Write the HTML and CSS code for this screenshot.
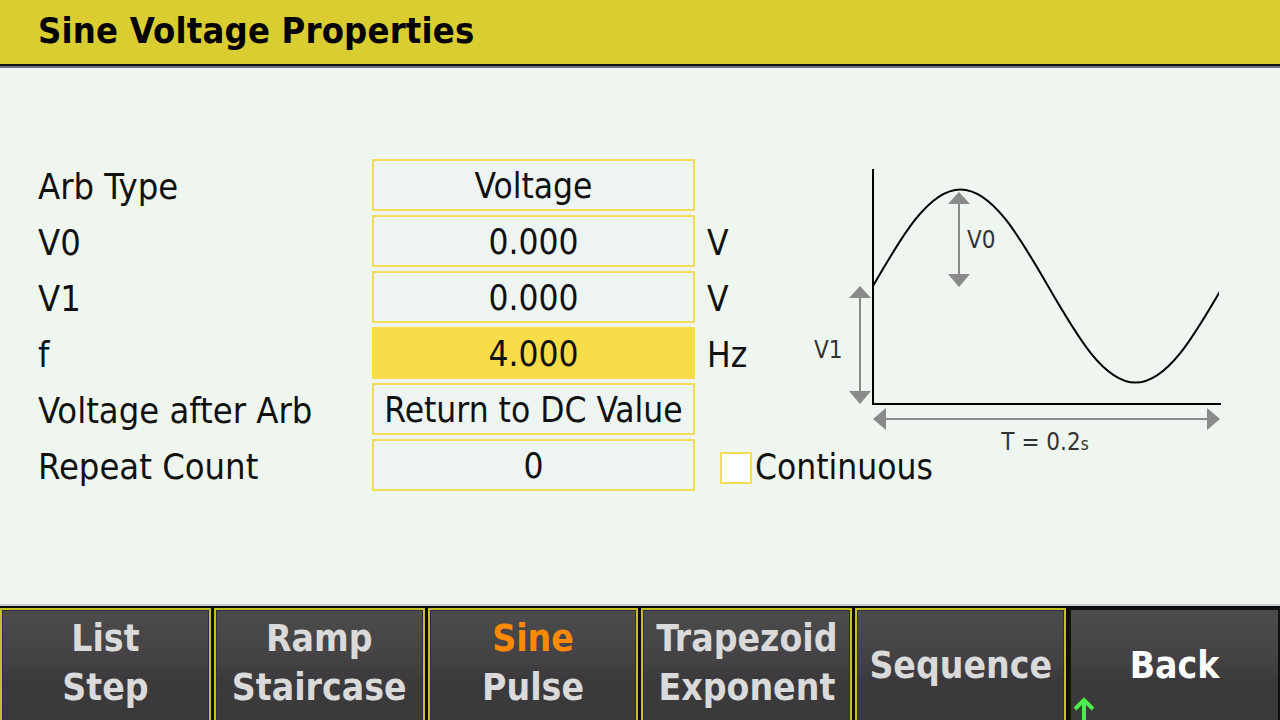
FILE: index.html
```html
<!DOCTYPE html>
<html>
<head>
<meta charset="utf-8">
<link rel="stylesheet" href="styles.css">
</head>
<body>
<div class="screen">
  <header class="titlebar">
    <h1 class="title">Sine Voltage Properties</h1>
  </header>
  <main class="content">
    <div class="form">
      <div class="label">Arb Type</div>
      <div class="field">Voltage</div>
      <div class="unit"></div>

      <div class="label">V0</div>
      <div class="field">0.000</div>
      <div class="unit">V</div>

      <div class="label">V1</div>
      <div class="field">0.000</div>
      <div class="unit">V</div>

      <div class="label">f</div>
      <div class="field selected">4.000</div>
      <div class="unit">Hz</div>

      <div class="label">Voltage after Arb</div>
      <div class="field">Return to DC Value</div>
      <div class="unit"></div>

      <div class="label">Repeat Count</div>
      <div class="field">0</div>
      <div class="unit"><span class="checkbox"></span><span class="check-label">Continuous</span></div>
    </div>
    <svg class="graph" width="430" height="300" viewBox="0 0 430 300">
      <defs>
        <clipPath id="plot"><rect x="0" y="0" width="419" height="300"/></clipPath>
      </defs>
      <line x1="73" y1="10" x2="73" y2="246" stroke="#000" stroke-width="2"/>
      <line x1="72" y1="245" x2="421" y2="245" stroke="#000" stroke-width="2"/>
      <path clip-path="url(#plot)" d="M73 127 C101.5 77.6 128.8 30.5 160.5 30.5 S219.5 77.6 248 127 S303.8 223.5 335.5 223.5 S394.5 176.4 423 127" fill="none" stroke="#000" stroke-width="2"/>
      <line x1="159" y1="40" x2="159" y2="118" stroke="#8a8a8a" stroke-width="2"/>
      <polygon points="148,45 170,45 159,33" fill="#8a8a8a"/>
      <polygon points="148,115 170,115 159,128" fill="#8a8a8a"/>
      <line x1="60" y1="134" x2="60" y2="236" stroke="#8a8a8a" stroke-width="2"/>
      <polygon points="49,139 71,139 60,127" fill="#8a8a8a"/>
      <polygon points="49,232 71,232 60,245" fill="#8a8a8a"/>
      <line x1="80" y1="260" x2="413" y2="260" stroke="#8a8a8a" stroke-width="2"/>
      <polygon points="86,249 86,271 73,260" fill="#8a8a8a"/>
      <polygon points="407,249 407,271 420,260" fill="#8a8a8a"/>
      <text x="167" y="89" class="glabel">V0</text>
      <text x="14" y="199" class="glabel">V1</text>
      <text x="245" y="291" class="glabel" text-anchor="middle">T = 0.2<tspan class="small">s</tspan></text>
    </svg>
  </main>
  <nav class="softkeys">
    <div class="key"><span>List</span><span>Step</span></div>
    <div class="key"><span>Ramp</span><span>Staircase</span></div>
    <div class="key"><span class="active">Sine</span><span>Pulse</span></div>
    <div class="key"><span>Trapezoid</span><span>Exponent</span></div>
    <div class="key"><span class="single">Sequence</span></div>
    <div class="key back"><span class="single">Back</span>
      <svg class="uparrow" width="26" height="26" viewBox="0 0 26 26">
        <path d="M13 4 V26 M4 13 L13 4 L22 13" fill="none" stroke="#4cf04c" stroke-width="4"/>
      </svg>
    </div>
  </nav>
</div>
</body>
</html>
```

FILE: styles.css
```css
* { box-sizing: border-box; }
html, body {
  margin: 0;
  padding: 0;
  width: 1280px;
  height: 720px;
  overflow: hidden;
  background: #eff6ef;
  font-family: "DejaVu Sans Condensed", "DejaVu Sans", sans-serif;
}
.screen {
  width: 1280px;
  height: 720px;
  display: flex;
  flex-direction: column;
  overflow: hidden;
}
.titlebar {
  height: 66px;
  flex: none;
  background: #d9cd32;
  border-bottom: 2px solid #111;
  box-shadow: 0 2px 0 #6d7282;
  display: flex;
  align-items: center;
  padding-left: 38px;
  padding-bottom: 4px;
}
.title {
  margin: 0;
  font-size: 36px;
  font-weight: bold;
  color: #000;
  letter-spacing: 0.2px;
}
.content {
  flex: 1;
  display: flex;
  align-items: flex-start;
  padding: 93px 0 0 38px;
}
.form {
  display: grid;
  grid-template-columns: 334px 323px 105px;
  grid-auto-rows: 52px;
  row-gap: 4px;
  width: 762px;
}
.label {
  font-size: 36px;
  color: #111;
  display: flex;
  align-items: center;
  padding-top: 2px;
  white-space: nowrap;
}
.field {
  border: 2px solid #f3dc57;
  background: #eef4f2;
  font-size: 35px;
  color: #111;
  display: flex;
  align-items: center;
  justify-content: center;
  padding-top: 2px;
  white-space: nowrap;
}
.field.selected {
  background: #f8dc4a;
  border-color: #f8dc4a;
}
.unit {
  font-size: 35px;
  color: #111;
  display: flex;
  align-items: center;
  padding-left: 12px;
  padding-top: 4px;
}
.checkbox {
  width: 32px;
  height: 32px;
  border: 2px solid #f3dc57;
  background: #fff;
  margin-left: 13px;
  margin-right: 3px;
  margin-top: 2px;
  flex: none;
}
.check-label {
  white-space: nowrap;
}
.graph {
  flex: none;
  margin-top: 0;
}
.glabel {
  font-family: "DejaVu Sans Condensed", "DejaVu Sans", sans-serif;
  font-size: 24px;
  fill: #333;
}
.glabel .small {
  font-size: 17px;
}
.softkeys {
  flex: none;
  height: 116px;
  background: #0d0d0d;
  border-top: 2px solid #c9cdd0;
  display: flex;
  gap: 3px;
  padding-top: 2px;
  overflow: hidden;
}
.key {
  flex: 1;
  height: 120px;
  position: relative;
  border: 2px solid #c8c020;
  box-shadow: inset 0 0 0 1px #2a2f4a;
  background: linear-gradient(#4c4c4c 0%, #434144 45%, #3b393c 60%, #3a3a3a 100%);
  display: flex;
  flex-direction: column;
  align-items: center;
  justify-content: flex-start;
  padding-top: 4px;
  color: #dadada;
  font-size: 37px;
  font-weight: bold;
  line-height: 49px;
  white-space: nowrap;
}
.key .single {
  margin-top: 27px;
}
.key .active {
  color: #ff8a00;
}
.key.back {
  border-color: #111;
  box-shadow: none;
  color: #fff;
}
.uparrow {
  position: absolute;
  left: 0;
  top: 86px;
}
```
